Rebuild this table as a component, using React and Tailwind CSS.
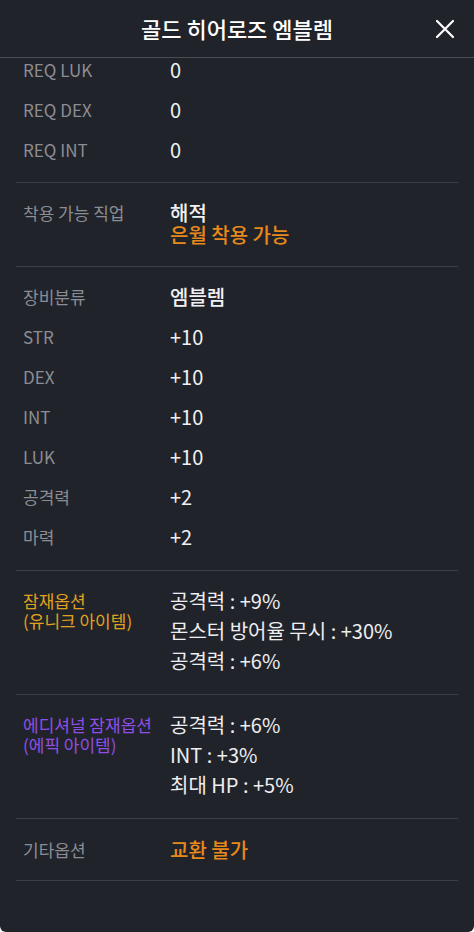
const font = { fontFamily: '"Noto Sans CJK KR", "Noto Sans", sans-serif' }

function Row({ label, children, labelClass = 'text-[#8b8d94]' }) {
  return (
    <div className="flex items-center h-[24px]">
      <div className={`w-[147px] shrink-0 text-[17px] ${labelClass}`}>{label}</div>
      <div className="text-[20px] text-[#f1f1f3]">{children}</div>
    </div>
  )
}

function Section({ className = '', children }) {
  return <div className={`mx-4 px-[7px] border-b border-[#3d3f47] ${className}`}>{children}</div>
}

function OptionSection({ label, color, lines, className = '' }) {
  return (
    <Section className={`flex items-start ${className}`}>
      <div className={`w-[147px] shrink-0 pt-[5px] text-[17px] leading-[20px] ${color}`}>
        {label.map((l) => (
          <div key={l}>{l}</div>
        ))}
      </div>
      <div className="text-[20px] leading-[30px] text-[#eeeef0]">
        {lines.map((l) => (
          <div key={l}>{l}</div>
        ))}
      </div>
    </Section>
  )
}

export default function App() {
  return (
    <div className="w-[474px] h-[932px] bg-[#21232a] overflow-hidden rounded-b-md" style={font}>
      <div className="relative h-[58px] border-b border-[#4a4c53] flex items-center justify-center">
        <h1 className="text-[22px] font-medium text-white">골드 히어로즈 엠블렘</h1>
        <button className="absolute right-[19px] top-[19px] text-white">
          <svg width="20" height="20" viewBox="0 0 20 20" fill="none" stroke="currentColor" strokeWidth="2.2" strokeLinecap="round">
            <path d="M2 2L18 18M18 2L2 18" />
          </svg>
        </button>
      </div>

      <Section className="pt-0 pb-[20px] flex flex-col gap-[16px]">
        <Row label="REQ LUK">0</Row>
        <Row label="REQ DEX">0</Row>
        <Row label="REQ INT">0</Row>
      </Section>

      <Section className="pt-[19px] pb-[20px] flex items-start">
        <div className="w-[147px] shrink-0 text-[17px] leading-[22px] text-[#8b8d94]">착용 가능 직업</div>
        <div className="text-[20px] leading-[22px]">
          <div className="text-[#f1f1f3] font-medium">해적</div>
          <div className="text-[#e8891c] font-medium">은월 착용 가능</div>
        </div>
      </Section>

      <Section className="pt-[18px] pb-[21px] flex flex-col gap-[16px]">
        <Row label="장비분류"><span className="font-medium">엠블렘</span></Row>
        <Row label="STR">+10</Row>
        <Row label="DEX">+10</Row>
        <Row label="INT">+10</Row>
        <Row label="LUK">+10</Row>
        <Row label="공격력">+2</Row>
        <Row label="마력">+2</Row>
      </Section>

      <OptionSection
        className="pt-[15px] pb-[18px]"
        label={['잠재옵션', '(유니크 아이템)']}
        color="text-[#e0a21f]"
        lines={['공격력 : +9%', '몬스터 방어율 무시 : +30%', '공격력 : +6%']}
      />

      <OptionSection
        className="pt-[15px] pb-[18px]"
        label={['에디셔널 잠재옵션', '(에픽 아이템)']}
        color="text-[#8f4fe6]"
        lines={['공격력 : +6%', 'INT : +3%', '최대 HP : +5%']}
      />

      <Section className="pt-[19px] pb-[18px]">
        <Row label="기타옵션">
          <span className="font-medium text-[#e8891c]">교환 불가</span>
        </Row>
      </Section>
    </div>
  )
}
